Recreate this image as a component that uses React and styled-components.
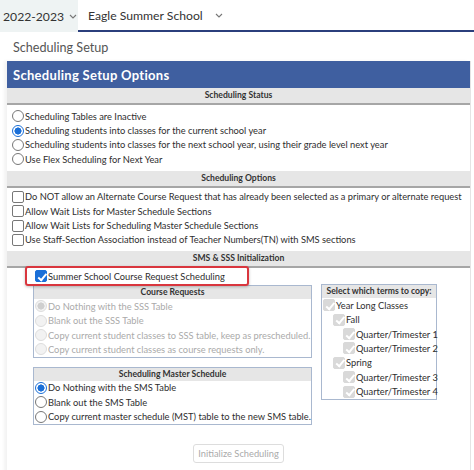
import styled, { createGlobalStyle } from "styled-components";

const Global = createGlobalStyle`
    html, body {
        margin: 0;
        padding: 0;
        background: #fff;
        font-family: Lato, "Liberation Sans", Arial, sans-serif;
        color: #333;
    }
`;

const TopBar = styled.div`
    display: flex;
    align-items: stretch;
    height: 30px;
    border-bottom: 2px solid #2b3f7c;
`;

const YearTab = styled.div`
    display: flex;
    align-items: center;
    gap: 5px;
    width: 78px;
    box-sizing: border-box;
    padding-left: 3px;
    background: #eef3f3;
    margin-bottom: -2px;
    font-size: 12.2px;
    color: #333;
    white-space: nowrap;
`;

const SchoolTab = styled.div`
    display: flex;
    align-items: center;
    gap: 12px;
    padding-left: 10px;
    font-size: 12.2px;
    color: #333;
    white-space: nowrap;
`;

const Chevron = () => (
    <svg width="8" height="5" viewBox="0 0 8 5">
        <path d="M1 1l3 3 3-3" fill="none" stroke="#777" strokeWidth="1.1" />
    </svg>
);

const Page = styled.div`
    padding: 0 4px 0 7px;
`;

const PageTitle = styled.div`
    font-size: 12.6px;
    color: #555;
    padding: 8px 0 6px 6px;
`;

const Panel = styled.div`
    box-shadow: -3px 0 3px rgba(0, 0, 0, 0.05), 1px 0 0 #e4e4e4;
    padding-bottom: 20px;
`;

const Banner = styled.div`
    background: #3f5fa0;
    color: #fff;
    font-size: 13px;
    font-weight: bold;
    height: 27px;
    display: flex;
    align-items: center;
    padding-left: 6px;
    letter-spacing: 0.3px;
`;

const SectionHead = styled.div`
    background: #e6e6e6;
    border-bottom: 2px solid #a6a6a6;
    height: 15px;
    font-size: 8.6px;
    font-weight: bold;
    text-align: center;
    line-height: 15px;
    color: #333;
`;

const List = styled.div`
    padding: ${(p) => p.$pad || "4px 0 4px 5px"};
`;

const Row = styled.label`
    display: flex;
    align-items: center;
    height: 14.4px;
    font-size: 9.3px;
    color: ${(p) => (p.$disabled ? "#aaa" : "#2e2e2e")};
    padding-left: ${(p) => (p.$indent || 0) * 10}px;
    white-space: nowrap;
`;

const Radio = styled.input.attrs({ type: "radio" })`
    appearance: none;
    margin: 0 1px 0 0;
    width: 12px;
    height: 12px;
    border-radius: 50%;
    border: 1px solid #777;
    background: #fff;
    box-sizing: border-box;
    flex: none;

    &:checked {
        border-color: #1a6fd8;
        background: radial-gradient(circle, #1a6fd8 0 3.3px, #fff 3.8px);
    }
    &:disabled {
        border-color: #ddd;
        background: #f2f2f2;
    }
    &:disabled:checked {
        background: radial-gradient(circle, #cfcfcf 0 3.3px, #f2f2f2 3.8px);
    }
`;

const Check = styled.input.attrs({ type: "checkbox" })`
    appearance: none;
    margin: 0 1px 0 0;
    width: 12px;
    height: 12px;
    border-radius: 2px;
    border: 1px solid #777;
    background: #fff;
    box-sizing: border-box;
    flex: none;
    position: relative;

    &:checked {
        border-color: #1a6fd8;
        background: #1a6fd8;
    }
    &:checked::after {
        content: "";
        position: absolute;
        left: 3.5px;
        top: 0.5px;
        width: 3px;
        height: 6.5px;
        border: solid #fff;
        border-width: 0 2px 2px 0;
        transform: rotate(40deg);
    }
    &:disabled {
        border-color: #ddd;
        background: #eee;
    }
    &:disabled:checked {
        border-color: #d9d9d9;
        background: #d9d9d9;
    }
`;

const SmsArea = styled.div`
    padding-left: 18px;
`;

const Highlight = styled.div`
    width: 224px;
    height: 20px;
    box-sizing: border-box;
    border: 2px solid #d9363e;
    border-radius: 3px;
    box-shadow: 0 1px 3px rgba(0, 0, 0, 0.25);
    display: flex;
    align-items: center;
    padding-left: 8px;
    margin-top: -2px;
    position: relative;
    z-index: 1;
`;

const Columns = styled.div`
    display: flex;
    align-items: flex-start;
    gap: 9px;
    padding-left: 8px;
`;

const LeftCol = styled.div`
    display: flex;
    flex-direction: column;
    gap: 9px;
    width: 279px;
`;

const Box = styled.div`
    border: 1px solid #a9b8cf;
    width: ${(p) => p.$w || "auto"};
    box-sizing: border-box;
    margin-top: ${(p) => p.$top || "0"};
`;

const BoxHead = styled.div`
    background: #e6e6e6;
    font-size: 8.6px;
    font-weight: bold;
    text-align: center;
    height: 13px;
    line-height: 13px;
    color: #333;
    white-space: nowrap;
`;

const TermText = styled.span`
    color: #2e2e2e;
`;

const Footer = styled.div`
    display: flex;
    justify-content: center;
    padding-top: 19px;
`;

const Button = styled.button`
    font-family: inherit;
    font-size: 9.3px;
    color: #aaa;
    background: #fff;
    border: 1px solid #ddd;
    border-radius: 3px;
    width: 91px;
    height: 19px;
    padding: 0;
`;

const status = [
    "Scheduling Tables are Inactive",
    "Scheduling students into classes for the current school year",
    "Scheduling students into classes for the next school year, using their grade level next year",
    "Use Flex Scheduling for Next Year",
];

const options = [
    "Do NOT allow an Alternate Course Request that has already been selected as a primary or alternate request",
    "Allow Wait Lists for Master Schedule Sections",
    "Allow Wait Lists for Scheduling Master Schedule Sections",
    "Use Staff-Section Association instead of Teacher Numbers(TN) with SMS sections",
];

const requests = [
    "Do Nothing with the SSS Table",
    "Blank out the SSS Table",
    "Copy current student classes to SSS table, keep as prescheduled.",
    "Copy current student classes as course requests only.",
];

const terms = [
    ["Year Long Classes", 0],
    ["Fall", 1],
    ["Quarter/Trimester 1", 2],
    ["Quarter/Trimester 2", 2],
    ["Spring", 1],
    ["Quarter/Trimester 3", 2],
    ["Quarter/Trimester 4", 2],
];

const master = [
    "Do Nothing with the SMS Table",
    "Blank out the SMS Table",
    "Copy current master schedule (MST) table to the new SMS table.",
];

export default function App() {
    return (
        <>
            <Global />
            <TopBar>
                <YearTab>2022-2023 <Chevron /></YearTab>
                <SchoolTab>Eagle Summer School <Chevron /></SchoolTab>
            </TopBar>
            <Page>
                <PageTitle>Scheduling Setup</PageTitle>
                <Panel>
                    <Banner>Scheduling Setup Options</Banner>

                    <SectionHead>Scheduling Status</SectionHead>
                    <List>
                        {status.map((t, i) => (
                            <Row key={t}>
                                <Radio name="status" defaultChecked={i === 1} />
                                {t}
                            </Row>
                        ))}
                    </List>

                    <SectionHead>Scheduling Options</SectionHead>
                    <List $pad="2px 0 4px 5px">
                        {options.map((t) => (
                            <Row key={t}>
                                <Check />
                                {t}
                            </Row>
                        ))}
                    </List>

                    <SectionHead>SMS &amp; SSS Initialization</SectionHead>
                    <SmsArea>
                        <Highlight>
                            <Row>
                                <Check defaultChecked />
                                Summer School Course Request Scheduling
                            </Row>
                        </Highlight>
                        <Columns>
                            <LeftCol>
                                <Box $top="-1px">
                                    <BoxHead>Course Requests</BoxHead>
                                    <List $pad="0 0 0 1px">
                                        {requests.map((t, i) => (
                                            <Row key={t} $disabled>
                                                <Radio name="req" disabled defaultChecked={i === 0} />
                                                {t}
                                            </Row>
                                        ))}
                                    </List>
                                </Box>
                                <Box>
                                    <BoxHead>Scheduling Master Schedule</BoxHead>
                                    <List $pad="0 0 0 1px">
                                        {master.map((t, i) => (
                                            <Row key={t}>
                                                <Radio name="sms" defaultChecked={i === 0} />
                                                {t}
                                            </Row>
                                        ))}
                                    </List>
                                </Box>
                            </LeftCol>
                            <Box $w="116px" $top="-2px">
                                <BoxHead>Select which terms to copy:</BoxHead>
                                <List $pad="0 0 0 1px">
                                    {terms.map(([t, lvl]) => (
                                        <Row key={t} $indent={lvl} $disabled>
                                            <Check disabled defaultChecked />
                                            <TermText>{t}</TermText>
                                        </Row>
                                    ))}
                                </List>
                            </Box>
                        </Columns>
                    </SmsArea>
                    <Footer>
                        <Button disabled>Initialize Scheduling</Button>
                    </Footer>
                </Panel>
            </Page>
        </>
    );
}
